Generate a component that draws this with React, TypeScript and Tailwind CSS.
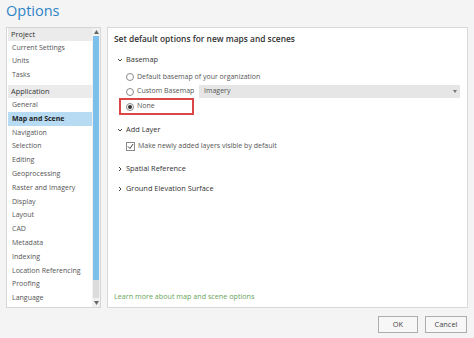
const font = { fontFamily: '"Open Sans", "Noto Sans", sans-serif' }

const ChevronDown = () => (
  <svg width="6" height="6" viewBox="0 0 6 6" className="mr-[3px]">
    <path d="M1 2 L3 4 L5 2" fill="none" stroke="#444" strokeWidth="1" />
  </svg>
)

const ChevronRight = () => (
  <svg width="6" height="6" viewBox="0 0 6 6" className="mr-[3px]">
    <path d="M2 1 L4 3 L2 5" fill="none" stroke="#444" strokeWidth="1" />
  </svg>
)

const Radio = ({ checked }: { checked?: boolean }) => (
  <span className="w-[8px] h-[8px] rounded-full border border-[#8a8a8a] bg-white flex items-center justify-center mr-[3px] shrink-0">
    {checked && <span className="w-[4px] h-[4px] rounded-full bg-[#333]" />}
  </span>
)

const navItems = [
  { type: 'header', label: 'Project' },
  { label: 'Current Settings' },
  { label: 'Units' },
  { label: 'Tasks' },
  { type: 'header', label: 'Application' },
  { label: 'General' },
  { label: 'Map and Scene', selected: true },
  { label: 'Navigation' },
  { label: 'Selection' },
  { label: 'Editing' },
  { label: 'Geoprocessing' },
  { label: 'Raster and Imagery' },
  { label: 'Display' },
  { label: 'Layout' },
  { label: 'CAD' },
  { label: 'Metadata' },
  { label: 'Indexing' },
  { label: 'Location Referencing' },
  { label: 'Proofing' },
  { label: 'Language' },
]

export default function App() {
  return (
    <div className="w-[474px] h-[338px] bg-[#f4f4f4] flex flex-col overflow-hidden" style={font}>
      <div className="h-[27px] pl-[6px] flex items-center text-[14.5px] text-[#2f84c6] leading-none pb-[4px]">
        Options
      </div>

      <div className="flex px-[6px] gap-[6px] h-[281px]">
        {/* left nav */}
        <div className="w-[95px] bg-white border border-[#d6d6d6] flex">
          <div className="flex-1 pl-[1px]">
            {navItems.map((item) =>
              item.type === 'header' ? (
                <div
                  key={item.label}
                  className={`h-[13px] bg-[#ebebeb] text-[#333] text-[7.4px] flex items-center pl-[3px] ${
                    item.label === 'Application' ? 'mt-[3px]' : 'mt-[0px]'
                  }`}
                >
                  {item.label}
                </div>
              ) : (
                <div
                  key={item.label}
                  className={`h-[13.8px] text-[7px] flex items-center pl-[4px] whitespace-nowrap ${
                    item.selected ? 'bg-[#b6dbf3] text-[#222] font-bold' : 'text-[#555]'
                  }`}
                >
                  {item.label}
                </div>
              )
            )}
          </div>
          <div className="w-[8px] flex flex-col items-center bg-[#f0f0f0]">
            <div className="h-[8px] flex items-center justify-center">
              <svg width="5" height="4" viewBox="0 0 5 4">
                <path d="M0 4 L2.5 0 L5 4 Z" fill="#666" />
              </svg>
            </div>
            <div className="w-[6px] h-[244px] bg-[#7cbfea]" />
            <div className="w-[6px] flex-1 bg-[#dcdcdc]" />
            <div className="h-[9px] flex items-center justify-center">
              <svg width="5" height="4" viewBox="0 0 5 4">
                <path d="M0 0 L2.5 4 L5 0 Z" fill="#666" />
              </svg>
            </div>
          </div>
        </div>

        {/* right panel */}
        <div className="flex-1 bg-white border border-[#d9d9d9] flex flex-col pl-[6px] pr-[7px]">
          <div className="mt-[5px] text-[8.4px] font-semibold text-[#333] h-[13px] flex items-center">
            Set default options for new maps and scenes
          </div>

          <div className="mt-[8px] ml-[3px] h-[12px] flex items-center text-[7.4px] text-[#333]">
            <ChevronDown />
            Basemap
          </div>

          <div className="ml-[12px] mt-[4px] flex flex-col text-[7px] text-[#555]">
            <div className="h-[14px] flex items-center">
              <Radio />
              Default basemap of your organization
            </div>
            <div className="h-[15px] flex items-center">
              <Radio />
              <span className="w-[62px] shrink-0">Custom Basemap</span>
              <div className="flex-1 h-[13px] bg-[#e6e6e6] flex items-center justify-between pl-[5px] pr-[3px] text-[#555]">
                <span>Imagery</span>
                <svg width="4" height="3" viewBox="0 0 4 3">
                  <path d="M0 0 L2 3 L4 0 Z" fill="#777" />
                </svg>
              </div>
            </div>
            <div className="relative h-[15px] flex items-center">
              <div className="absolute left-[-7px] top-[-1px] w-[75px] h-[17px] border-2 border-[#dd4646]" />
              <Radio checked />
              None
            </div>
          </div>

          <div className="mt-[10px] ml-[3px] h-[12px] flex items-center text-[7.4px] text-[#333]">
            <ChevronDown />
            Add Layer
          </div>

          <div className="ml-[12px] mt-[3px] h-[14px] flex items-center text-[7px] text-[#555]">
            <span className="w-[9px] h-[9px] border border-[#8a8a8a] mr-[3px] flex items-center justify-center">
              <svg width="7" height="7" viewBox="0 0 7 7">
                <path d="M1 3.5 L3 5.5 L6 1" fill="none" stroke="#333" strokeWidth="0.9" />
              </svg>
            </span>
            Make newly added layers visible by default
          </div>

          <div className="mt-[10px] ml-[3px] h-[12px] flex items-center text-[7.4px] text-[#333]">
            <ChevronRight />
            Spatial Reference
          </div>

          <div className="mt-[8px] ml-[3px] h-[12px] flex items-center text-[7.4px] text-[#333]">
            <ChevronRight />
            Ground Elevation Surface
          </div>

          <div className="mt-auto mb-[5px] text-[7.2px] text-[#6aa45a] h-[12px] flex items-center">
            Learn more about map and scene options
          </div>
        </div>
      </div>

      <div className="flex justify-end gap-[7px] pr-[7px] pt-[8px]">
        <button className="w-[40px] h-[17px] border border-[#adadad] bg-[#f7f7f7] text-[7.4px] text-[#444] flex items-center justify-center">
          OK
        </button>
        <button className="w-[42px] h-[17px] border border-[#adadad] bg-[#f7f7f7] text-[7.4px] text-[#444] flex items-center justify-center">
          Cancel
        </button>
      </div>
    </div>
  )
}
